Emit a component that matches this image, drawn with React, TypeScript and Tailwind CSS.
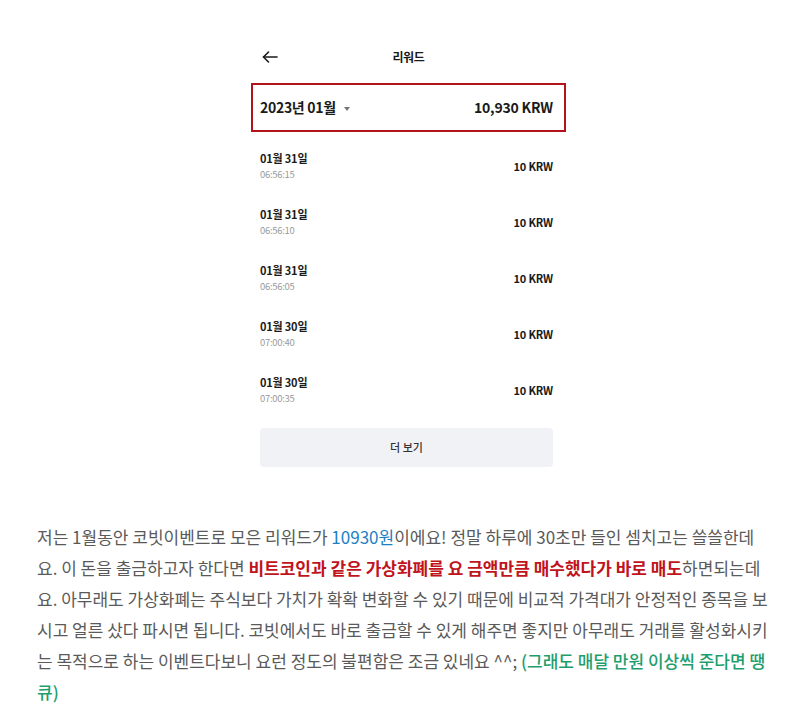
import React from 'react';

const KR = "font-['Noto_Sans_CJK_KR','Noto_Sans',sans-serif]";

interface RewardRow {
  date: string;
  time: string;
  amount: string;
}

const rows: RewardRow[] = [
  { date: '01월 31일', time: '06:56:15', amount: '10 KRW' },
  { date: '01월 31일', time: '06:56:10', amount: '10 KRW' },
  { date: '01월 31일', time: '06:56:05', amount: '10 KRW' },
  { date: '01월 30일', time: '07:00:40', amount: '10 KRW' },
  { date: '01월 30일', time: '07:00:35', amount: '10 KRW' },
];

const BackArrow = () => (
  <svg width="16" height="12" viewBox="0 0 16 12" fill="none" stroke="#1a1a1a" strokeWidth="1.6" strokeLinecap="round" strokeLinejoin="round">
    <path d="M15 6H1.5" />
    <path d="M6.5 1 1.5 6l5 5" />
  </svg>
);

const App: React.FC = () => {
  return (
    <div className={`w-[800px] h-[703px] bg-white overflow-hidden ${KR}`}>
      {/* app screenshot */}
      <div className="ml-[251px] w-[315px] pt-[40px]">
        <div className="h-[34px] relative flex items-center justify-center">
          <div className="absolute left-[11px] top-[11px]">
            <BackArrow />
          </div>
          <span className="text-[12px] font-bold text-[#1a1a1a] tracking-[-0.3px]">리워드</span>
        </div>

        <div className="mt-[9px] h-[49px] border-2 border-[#b3141c] flex items-center justify-between pl-[7px] pr-[11px]">
          <div className="flex items-center">
            <span className="text-[14px] font-bold text-[#1a1a1a] tracking-[-0.3px]">2023년 01월</span>
            <span className="ml-[8px] mt-[2px] w-0 h-0 border-l-[3.5px] border-r-[3.5px] border-t-[4px] border-l-transparent border-r-transparent border-t-[#777]" />
          </div>
          <span className="text-[14px] font-bold text-[#1a1a1a] tracking-[-0.2px]">10,930 KRW</span>
        </div>

        <div className="px-[9px] pr-[13px]">
          {rows.map((row, i) => (
            <div key={i} className="h-[56px] pt-[18px] flex items-start justify-between">
              <div className="flex flex-col">
                <span className="text-[11px] leading-[16px] font-bold text-[#1a1a1a] tracking-[-0.2px]">{row.date}</span>
                <span className="text-[9.5px] leading-[14px] mt-[1px] text-[#9a9a9a] tracking-[-0.3px]">{row.time}</span>
              </div>
              <span className="mt-[8px] text-[11px] leading-[16px] font-bold text-[#1a1a1a] tracking-[-0.2px]">{row.amount}</span>
            </div>
          ))}
          <button className="mt-[16px] w-full h-[39px] rounded-[4px] bg-[#f1f2f6] text-[11px] text-[#333] font-medium">
            더 보기
          </button>
        </div>
      </div>

      {/* blog paragraph */}
      <div className="mt-[54px] pl-[37px] text-[17px] leading-[31px] text-[#5a5a5a] whitespace-nowrap">
        <div>
          저는 1월동안 코빗이벤트로 모은 리워드가 <span className="text-[#1b7fc6]">10930원</span>이에요! 정말 하루에 30초만 들인 셈치고는 쓸쓸한데
        </div>
        <div>
          요. 이 돈을 출금하고자 한다면{' '}
          <span className="text-[#c0141c] font-bold">비트코인과 같은 가상화폐를 요 금액만큼 매수했다가 바로 매도</span>하면되는데
        </div>
        <div>요. 아무래도 가상화폐는 주식보다 가치가 확확 변화할 수 있기 때문에 비교적 가격대가 안정적인 종목을 보</div>
        <div>시고 얼른 샀다 파시면 됩니다. 코빗에서도 바로 출금할 수 있게 해주면 좋지만 아무래도 거래를 활성화시키</div>
        <div>
          는 목적으로 하는 이벤트다보니 요런 정도의 불편함은 조금 있네요 ^^;{' '}
          <span className="text-[#1e9e6c] font-medium">(그래도 매달 만원 이상씩 준다면 땡</span>
        </div>
        <div>
          <span className="text-[#1e9e6c] font-medium">큐)</span>
        </div>
      </div>
    </div>
  );
};

export default App;
